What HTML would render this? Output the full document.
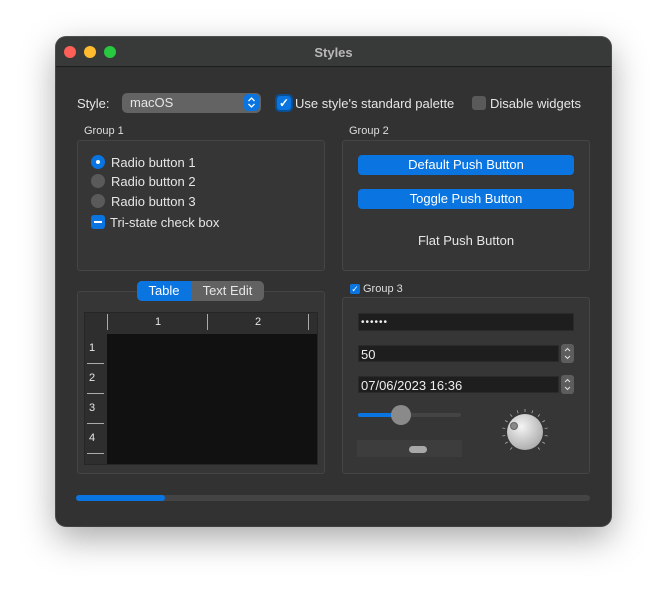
<!DOCTYPE html>
<html><head><style>
*{margin:0;padding:0;box-sizing:border-box}
body{width:667px;height:600px;background:#fff;position:relative;overflow:hidden;font-family:"Liberation Sans",sans-serif;color:#e6e6e6}
.a{position:absolute}
.win{left:56px;top:37px;width:555px;height:489px;background:#323232;border-radius:10px;box-shadow:0 12px 35px rgba(0,0,0,.35),0 0 0 1px #555;overflow:hidden}
.tb{left:0;top:0;width:555px;height:30px;background:#383a3a;border-bottom:1px solid #1e1e1e}
.dot{width:12px;height:12px;border-radius:50%;top:9px}
.box{border:1px solid #454545;background:#363636;border-radius:3px}
.t13{font-size:13px}
.lbl{font-size:11px;color:#ddd}
.btn{background:#0a74e0;border-radius:4px;color:#fff;font-size:13px;text-align:center;line-height:20px}
.radio{width:14px;height:14px;border-radius:50%;background:#5a5a5a}
.fld{background:#1e1e1e;border:1px solid #2a2a2a;font-size:13px;line-height:17px;padding-left:2px;color:#eee}
.spin{width:13px;height:19px;background:#5d5d5d;border-radius:3px}
</style></head><body>
<div class="a win">
 <div class="a tb"></div>
 <div class="a dot" style="left:8px;background:#fe5f57"></div>
 <div class="a dot" style="left:28px;background:#febc2e"></div>
 <div class="a dot" style="left:48px;background:#28c840"></div>
 <div class="a" style="left:0;width:555px;top:8px;text-align:center;font-size:13px;font-weight:bold;color:#b8b8b8">Styles</div>
</div>
<div class="a t13" style="left:77px;top:96px">Style:</div>
<div class="a" style="left:122px;top:93px;width:139px;height:20px;background:#636363;border-radius:5px;font-size:13px;line-height:20px;padding-left:8px">macOS</div>
<svg class="a" style="left:244px;top:94px" width="15" height="17"><rect width="15" height="17" rx="4" fill="#0a74e0"/><path d="M4.5 7 L7.5 4 L10.5 7 M4.5 10 L7.5 13 L10.5 10" stroke="#fff" stroke-width="1.3" fill="none"/></svg>
<div class="a" style="left:275px;top:94px;width:18px;height:18px;border-radius:5px;background:#0a4f93"></div>
<div class="a" style="left:277px;top:96px;width:14px;height:14px;border-radius:3px;background:#0a74e0;color:#fff;font-size:12px;text-align:center;line-height:14px;font-weight:bold">✓</div>
<div class="a t13" style="left:295px;top:96px">Use style's standard palette</div>
<div class="a" style="left:472px;top:96px;width:14px;height:14px;border-radius:3px;background:#5a5a5a"></div>
<div class="a t13" style="left:490px;top:96px">Disable widgets</div>

<div class="a lbl" style="left:84px;top:125px">Group 1</div>
<div class="a box" style="left:77px;top:140px;width:248px;height:131px"></div>
<div class="a radio" style="left:91px;top:155px;background:#0a74e0"></div>
<div class="a" style="left:96px;top:160px;width:4px;height:4px;border-radius:50%;background:#fff"></div>
<div class="a radio" style="left:91px;top:174px"></div>
<div class="a radio" style="left:91px;top:194px"></div>
<div class="a" style="left:91px;top:215px;width:14px;height:14px;border-radius:3px;background:#0a74e0"></div>
<div class="a" style="left:94px;top:221px;width:8px;height:2px;background:#fff"></div>
<div class="a t13" style="left:111px;top:155px">Radio button 1</div>
<div class="a t13" style="left:111px;top:174px">Radio button 2</div>
<div class="a t13" style="left:111px;top:194px">Radio button 3</div>
<div class="a t13" style="left:110px;top:215px">Tri-state check box</div>

<div class="a lbl" style="left:349px;top:125px">Group 2</div>
<div class="a box" style="left:342px;top:140px;width:248px;height:131px"></div>
<div class="a btn" style="left:358px;top:155px;width:216px;height:20px">Default Push Button</div>
<div class="a btn" style="left:358px;top:189px;width:216px;height:20px">Toggle Push Button</div>
<div class="a t13" style="left:358px;width:216px;text-align:center;top:233px">Flat Push Button</div>

<div class="a box" style="left:77px;top:291px;width:248px;height:183px"></div>
<div class="a" style="left:137px;top:281px;width:127px;height:20px;background:#626262;border-radius:5px"></div>
<div class="a" style="left:137px;top:281px;width:54px;height:20px;background:#0a74e0;border-radius:5px 0 0 5px;color:#fff;font-size:13px;text-align:center;line-height:20px">Table</div>
<div class="a t13" style="left:191px;top:281px;width:73px;text-align:center;line-height:20px">Text Edit</div>
<div class="a" style="left:84px;top:312px;width:234px;height:153px;background:#111;border:1px solid #262626"></div>
<div class="a" style="left:85px;top:313px;width:232px;height:21px;background:#2e2e2e"></div>
<div class="a" style="left:85px;top:313px;width:22px;height:151px;background:#2e2e2e"></div>
<div class="a" style="left:107px;top:314px;width:1px;height:16px;background:#aaa"></div>
<div class="a" style="left:207px;top:314px;width:1px;height:16px;background:#aaa"></div>
<div class="a" style="left:308px;top:314px;width:1px;height:16px;background:#aaa"></div>
<div class="a" style="left:108px;top:316px;width:100px;text-align:center;font-size:11px">1</div>
<div class="a" style="left:208px;top:316px;width:100px;text-align:center;font-size:11px">2</div>
<div class="a" style="left:89px;top:342px;font-size:11px">1</div>
<div class="a" style="left:89px;top:372px;font-size:11px">2</div>
<div class="a" style="left:89px;top:402px;font-size:11px">3</div>
<div class="a" style="left:89px;top:432px;font-size:11px">4</div>
<div class="a" style="left:87px;top:363px;width:17px;height:1px;background:#aaa"></div>
<div class="a" style="left:87px;top:393px;width:17px;height:1px;background:#aaa"></div>
<div class="a" style="left:87px;top:423px;width:17px;height:1px;background:#aaa"></div>
<div class="a" style="left:87px;top:453px;width:17px;height:1px;background:#aaa"></div>

<div class="a" style="left:350px;top:284px;width:10px;height:10px;border-radius:2px;background:#0a74e0;color:#fff;font-size:9px;line-height:10px;text-align:center">✓</div>
<div class="a lbl" style="left:363px;top:283px">Group 3</div>
<div class="a box" style="left:342px;top:297px;width:248px;height:177px"></div>
<div class="a fld" style="left:358px;top:313px;width:216px;height:18px;font-size:10px;letter-spacing:1px">••••••</div>
<div class="a fld" style="left:358px;top:345px;width:201px;height:17px">50</div>
<svg class="a" style="left:561px;top:344px" width="13" height="19"><rect width="13" height="19" rx="3" fill="#5d5d5d"/><path d="M4 7 L6.5 4.5 L9 7 M4 12 L6.5 14.5 L9 12" stroke="#ddd" stroke-width="1.1" fill="none"/></svg>
<div class="a fld" style="left:358px;top:376px;width:201px;height:17px">07/06/2023 16:36</div>
<svg class="a" style="left:561px;top:375px" width="13" height="19"><rect width="13" height="19" rx="3" fill="#5d5d5d"/><path d="M4 7 L6.5 4.5 L9 7 M4 12 L6.5 14.5 L9 12" stroke="#ddd" stroke-width="1.1" fill="none"/></svg>
<div class="a" style="left:358px;top:413px;width:103px;height:4px;border-radius:2px;background:#444"></div>
<div class="a" style="left:358px;top:413px;width:43px;height:4px;border-radius:2px;background:#0a74e0"></div>
<div class="a" style="left:391px;top:405px;width:20px;height:20px;border-radius:50%;background:#8a8a8a"></div>
<div class="a" style="left:357px;top:440px;width:105px;height:17px;background:#3d3d3d"></div>
<div class="a" style="left:409px;top:446px;width:18px;height:7px;border-radius:4px;background:#a8a8a8"></div>
<svg class="a" style="left:497px;top:404px" width="56" height="56" viewBox="0 0 56 56">
<g stroke="#aaa" stroke-width="0.8">
<line x1="28" y1="5" x2="28" y2="8" transform="rotate(-140 28 28)"/><line x1="28" y1="5" x2="28" y2="8" transform="rotate(-120 28 28)"/><line x1="28" y1="5" x2="28" y2="8" transform="rotate(-100 28 28)"/><line x1="28" y1="5" x2="28" y2="8" transform="rotate(-80 28 28)"/><line x1="28" y1="5" x2="28" y2="8" transform="rotate(-60 28 28)"/><line x1="28" y1="5" x2="28" y2="8" transform="rotate(-40 28 28)"/><line x1="28" y1="5" x2="28" y2="8" transform="rotate(-20 28 28)"/><line x1="28" y1="5" x2="28" y2="8" transform="rotate(0 28 28)"/><line x1="28" y1="5" x2="28" y2="8" transform="rotate(20 28 28)"/><line x1="28" y1="5" x2="28" y2="8" transform="rotate(40 28 28)"/><line x1="28" y1="5" x2="28" y2="8" transform="rotate(60 28 28)"/><line x1="28" y1="5" x2="28" y2="8" transform="rotate(80 28 28)"/><line x1="28" y1="5" x2="28" y2="8" transform="rotate(100 28 28)"/><line x1="28" y1="5" x2="28" y2="8" transform="rotate(120 28 28)"/><line x1="28" y1="5" x2="28" y2="8" transform="rotate(140 28 28)"/>
</g>
<defs><radialGradient id="g" cx="40%" cy="35%" r="70%"><stop offset="0" stop-color="#f4f4f4"/><stop offset="1" stop-color="#aaa"/></radialGradient></defs>
<circle cx="28" cy="28" r="18" fill="url(#g)"/>
<circle cx="17" cy="22" r="3.5" fill="#888" stroke="#666"/>
</svg>

<div class="a" style="left:76px;top:495px;width:514px;height:6px;border-radius:3px;background:#444"></div>
<div class="a" style="left:76px;top:495px;width:89px;height:6px;border-radius:3px;background:#0a74e0"></div>
</body></html>
